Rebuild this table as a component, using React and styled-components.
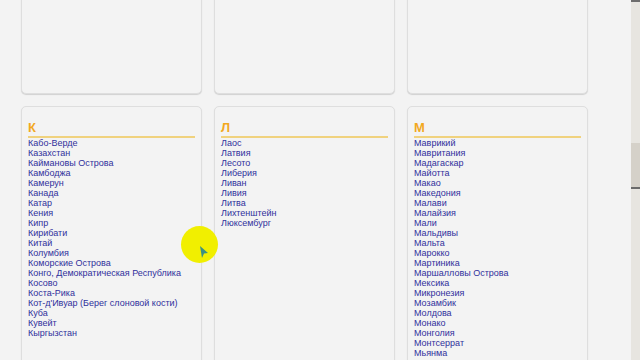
import React from "react";
import styled, { createGlobalStyle } from "styled-components";

const Global = createGlobalStyle`
  html, body { margin: 0; padding: 0; overflow: hidden; background: #f3f3f3; }
  body { font-family: "Liberation Sans", Arial, sans-serif; }
`;

const Screen = styled.div`
  display: flex;
  width: 640px;
  height: 360px;
  overflow: hidden;
  position: relative;
  background: #f3f3f3;
`;

const Content = styled.div`
  flex: 1;
  overflow: hidden;
`;

const Grid = styled.div`
  display: grid;
  grid-template-columns: repeat(3, 181px);
  column-gap: 12px;
  row-gap: 12px;
  padding-left: 21px;
  margin-top: -40px;
`;

const Card = styled.div`
  box-sizing: border-box;
  height: ${(p) => p.$h}px;
  background: #f3f3f3;
  border: 1px solid #dedede;
  border-radius: 5px;
  box-shadow: 0 1px 1px rgba(0, 0, 0, 0.14);
  padding: 13px 6px 0 6px;
`;

const Letter = styled.div`
  font-size: 13px;
  font-weight: bold;
  line-height: 16px;
  color: #f2a81e;
  border-bottom: 2px solid #f0d27e;
`;

const List = styled.ul`
  list-style: none;
  margin: 0;
  padding: 0;
`;

const Item = styled.li`
  font-size: 9px;
  line-height: 10px;
  color: #30309c;
  white-space: nowrap;
`;

const Scrollbar = styled.div`
  width: 9px;
  height: 360px;
  background: #e7e5e0;
  display: flex;
  flex-direction: column;
  border-top: 2px solid #6d6d6d;
  box-sizing: border-box;
`;

const Thumb = styled.div`
  margin-top: 141px;
  height: 44px;
  background: #d5d1c9;
  border-bottom: 2px solid #6a6a6a;
`;

const Highlight = styled.div`
  position: absolute;
  left: 181px;
  top: 226px;
  width: 37px;
  height: 37px;
  border-radius: 50%;
  background: #f1ef00;
`;

const Cursor = styled.svg`
  position: absolute;
  left: 199px;
  top: 245px;
`;

const data = [
  {
    l: "К",
    items: [
      "Кабо-Верде",
      "Казахстан",
      "Каймановы Острова",
      "Камбоджа",
      "Камерун",
      "Канада",
      "Катар",
      "Кения",
      "Кипр",
      "Кирибати",
      "Китай",
      "Колумбия",
      "Коморские Острова",
      "Конго, Демократическая Республика",
      "Косово",
      "Коста-Рика",
      "Кот-д'Ивуар (Берег слоновой кости)",
      "Куба",
      "Кувейт",
      "Кыргызстан",
    ],
  },
  {
    l: "Л",
    items: [
      "Лаос",
      "Латвия",
      "Лесото",
      "Либерия",
      "Ливан",
      "Ливия",
      "Литва",
      "Лихтенштейн",
      "Люксембург",
    ],
  },
  {
    l: "М",
    items: [
      "Маврикий",
      "Мавритания",
      "Мадагаскар",
      "Майотта",
      "Макао",
      "Македония",
      "Малави",
      "Малайзия",
      "Мали",
      "Мальдивы",
      "Мальта",
      "Марокко",
      "Мартиника",
      "Маршалловы Острова",
      "Мексика",
      "Микронезия",
      "Мозамбик",
      "Молдова",
      "Монако",
      "Монголия",
      "Монтсеррат",
      "Мьянма",
    ],
  },
];

export default function App() {
  return (
    <Screen>
      <Global />
      <Content>
        <Grid>
          <Card $h={134} />
          <Card $h={134} />
          <Card $h={134} />
          {data.map((g) => (
            <Card key={g.l} $h={320}>
              <Letter>{g.l}</Letter>
              <List>
                {g.items.map((t) => (
                  <Item key={t}>{t}</Item>
                ))}
              </List>
            </Card>
          ))}
        </Grid>
      </Content>
      <Scrollbar>
        <Thumb />
      </Scrollbar>
      <Highlight />
      <Cursor width="10" height="14" viewBox="0 0 10 14">
        <path d="M1 1 L9 8 L5 8.5 L3 13 Z" fill="#3c9182" />
      </Cursor>
    </Screen>
  );
}
